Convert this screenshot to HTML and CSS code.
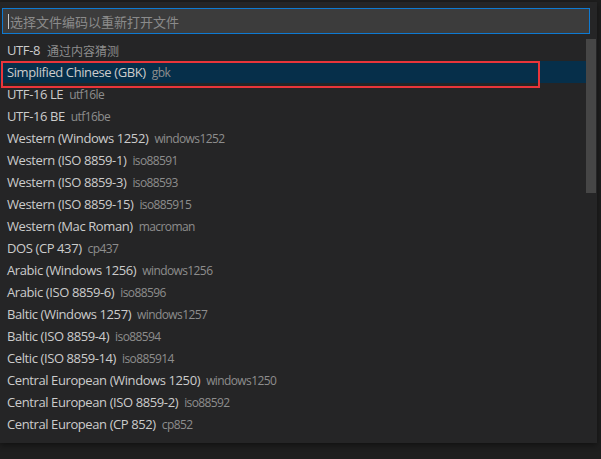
FILE: index.html
```html
<!DOCTYPE html>
<html lang="zh-CN">
<head>
<meta charset="utf-8">
<title>Reopen with Encoding</title>
<link rel="stylesheet" href="styles.css">
</head>
<body>
<div class="panel">
  <div class="input-row">
    <div class="input"><span class="caret"></span><span class="placeholder">选择文件编码以重新打开文件</span></div>
  </div>
  <div class="list">
    <div class="row"><span class="label">UTF-8</span><span class="desc cjk">通过内容猜测</span></div>
    <div class="row selected"><span class="label">Simplified Chinese (GBK)</span><span class="desc">gbk</span></div>
    <div class="row"><span class="label">UTF-16 LE</span><span class="desc">utf16le</span></div>
    <div class="row"><span class="label">UTF-16 BE</span><span class="desc">utf16be</span></div>
    <div class="row"><span class="label">Western (Windows 1252)</span><span class="desc">windows1252</span></div>
    <div class="row"><span class="label">Western (ISO 8859-1)</span><span class="desc">iso88591</span></div>
    <div class="row"><span class="label">Western (ISO 8859-3)</span><span class="desc">iso88593</span></div>
    <div class="row"><span class="label">Western (ISO 8859-15)</span><span class="desc">iso885915</span></div>
    <div class="row"><span class="label">Western (Mac Roman)</span><span class="desc">macroman</span></div>
    <div class="row"><span class="label">DOS (CP 437)</span><span class="desc">cp437</span></div>
    <div class="row"><span class="label">Arabic (Windows 1256)</span><span class="desc">windows1256</span></div>
    <div class="row"><span class="label">Arabic (ISO 8859-6)</span><span class="desc">iso88596</span></div>
    <div class="row"><span class="label">Baltic (Windows 1257)</span><span class="desc">windows1257</span></div>
    <div class="row"><span class="label">Baltic (ISO 8859-4)</span><span class="desc">iso88594</span></div>
    <div class="row"><span class="label">Celtic (ISO 8859-14)</span><span class="desc">iso885914</span></div>
    <div class="row"><span class="label">Central European (Windows 1250)</span><span class="desc">windows1250</span></div>
    <div class="row"><span class="label">Central European (ISO 8859-2)</span><span class="desc">iso88592</span></div>
    <div class="row"><span class="label">Central European (CP 852)</span><span class="desc">cp852</span></div>
    <div class="scrollbar"></div>
    <div class="highlight-box"></div>
  </div>
</div>
</body>
</html>
```

FILE: styles.css
```css
html, body {
  margin: 0;
  padding: 0;
  background: #1e1e1e;
  width: 601px;
  height: 459px;
  overflow: hidden;
}

body {
  font-family: "Open Sans", "Noto Sans CJK SC", sans-serif;
  font-size: 13px;
  color: #cccccc;
}

.panel {
  width: 597px;
  height: 441px;
  margin-top: 2px;
  background: #252526;
  box-shadow: 0 2px 6px rgba(0, 0, 0, 0.45);
}

.input-row {
  padding: 6px 7px 0 2px;
}

.input {
  height: 24px;
  box-sizing: content-box;
  border: 1px solid #0e7ad2;
  background: #3c3c3c;
  display: flex;
  align-items: center;
  padding-left: 5px;
}

.caret {
  width: 1px;
  height: 15px;
  background: #c8c8c8;
  margin-right: 1px;
}

.placeholder {
  color: #8b8b8b;
  font-family: "Noto Sans CJK SC", sans-serif;
  font-size: 13px;
}

.list {
  position: relative;
  margin-top: 5px;
  padding-right: 11px;
}

.row {
  height: 22px;
  display: flex;
  align-items: center;
  padding-left: 7px;
  white-space: nowrap;
}

.row.selected {
  background: #062f4a;
}

.label {
  color: #cccccc;
  letter-spacing: -0.4px;
}

.desc {
  margin-left: 6px;
  color: #8d8d8d;
  font-size: 12px;
  letter-spacing: -0.6px;
}

.desc.cjk {
  font-family: "Noto Sans CJK SC", sans-serif;
  letter-spacing: 0;
  margin-left: 7px;
}

.scrollbar {
  position: absolute;
  top: 0;
  right: 1px;
  width: 10px;
  height: 154px;
  background: rgba(121, 121, 121, 0.4);
}

.highlight-box {
  position: absolute;
  left: 1px;
  top: 22px;
  width: 535px;
  height: 23px;
  border: 2px solid #e8353a;
}
```
